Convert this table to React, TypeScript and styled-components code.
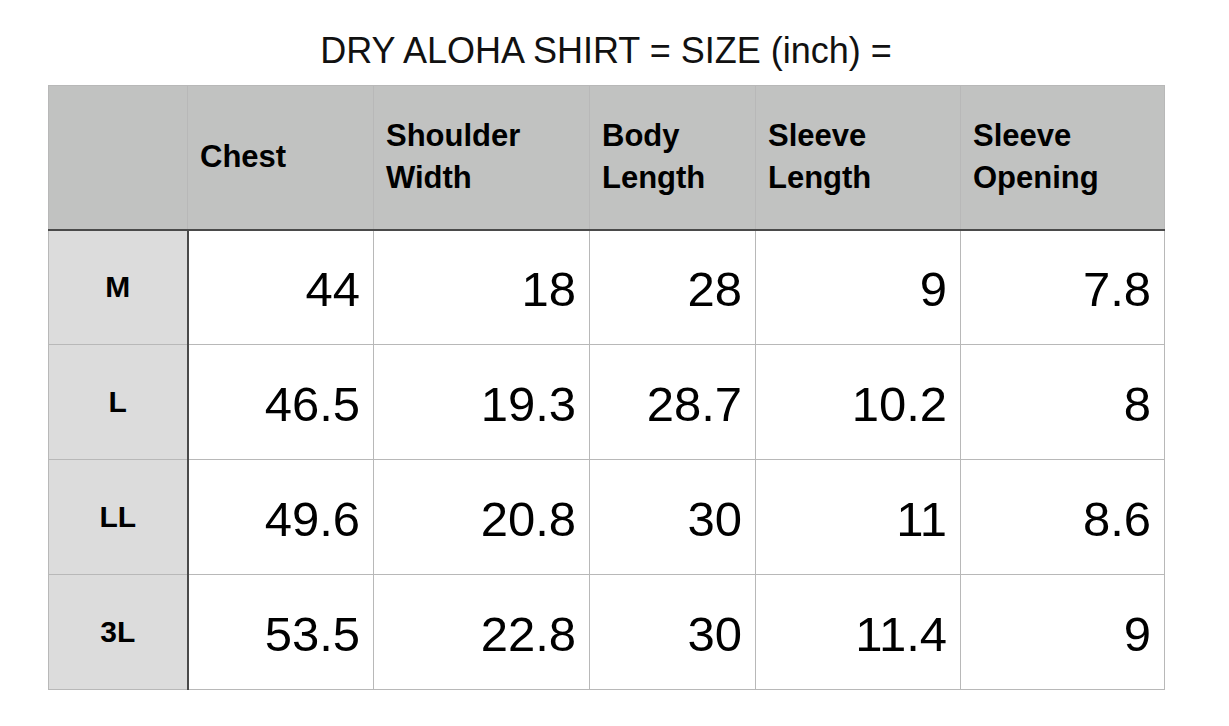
import React from 'react';
import styled, { createGlobalStyle } from 'styled-components';

const GlobalStyle = createGlobalStyle`
  html, body {
    margin: 0;
    padding: 0;
    background: #ffffff;
  }
  body {
    font-family: "Liberation Sans", Arial, sans-serif;
    color: #000000;
  }
`;

const line = '#b8b8b8';
const dark = '#4a4a4a';

const Page = styled.div`
  width: 1229px;
  padding: 0 0 0 48px;
  box-sizing: border-box;
`;

const Title = styled.h1`
  width: 1116px;
  height: 85px;
  margin: 0;
  padding-top: 16px;
  box-sizing: border-box;
  display: flex;
  align-items: center;
  justify-content: center;
  font-size: 36px;
  font-weight: 400;
  color: #111111;
`;

const Table = styled.table`
  border-collapse: collapse;
  table-layout: fixed;
  width: 1116px;
`;

const HeadCell = styled.th<{ $width: number }>`
  width: ${(p) => p.$width}px;
  height: 144px;
  padding: 0 0 0 12px;
  box-sizing: border-box;
  background: #c1c2c1;
  border: 1px solid ${line};
  border-bottom: 2px solid ${dark};
  text-align: left;
  vertical-align: middle;
  font-size: 31px;
  font-weight: 700;
  line-height: 42px;
`;

const SizeCell = styled.th`
  height: 115px;
  padding: 0;
  box-sizing: border-box;
  background: #dcdcdc;
  border: 1px solid ${line};
  border-right: 2px solid ${dark};
  text-align: center;
  vertical-align: middle;
  font-size: 30px;
  font-weight: 700;
`;

const ValueCell = styled.td`
  height: 115px;
  padding: 3px 13px 0 0;
  box-sizing: border-box;
  background: #ffffff;
  border: 1px solid ${line};
  text-align: right;
  vertical-align: middle;
  font-size: 49px;
  font-weight: 400;
`;

const columns = [
  { label: '', width: 139 },
  { label: 'Chest', width: 186 },
  { label: 'Shoulder Width', width: 216 },
  { label: 'Body Length', width: 166 },
  { label: 'Sleeve Length', width: 205 },
  { label: 'Sleeve Opening', width: 204 },
];

const rows: { size: string; values: string[] }[] = [
  { size: 'M', values: ['44', '18', '28', '9', '7.8'] },
  { size: 'L', values: ['46.5', '19.3', '28.7', '10.2', '8'] },
  { size: 'LL', values: ['49.6', '20.8', '30', '11', '8.6'] },
  { size: '3L', values: ['53.5', '22.8', '30', '11.4', '9'] },
];

function App() {
  return (
    <Page>
      <GlobalStyle />
      <Title>DRY ALOHA SHIRT = SIZE (inch) =</Title>
      <Table>
        <thead>
          <tr>
            {columns.map((col, i) => (
              <HeadCell key={i} $width={col.width}>
                {col.label.split(' ').map((word, j) => (
                  <React.Fragment key={j}>
                    {j > 0 && <br />}
                    {word}
                  </React.Fragment>
                ))}
              </HeadCell>
            ))}
          </tr>
        </thead>
        <tbody>
          {rows.map((row) => (
            <tr key={row.size}>
              <SizeCell>{row.size}</SizeCell>
              {row.values.map((v, i) => (
                <ValueCell key={i}>{v}</ValueCell>
              ))}
            </tr>
          ))}
        </tbody>
      </Table>
    </Page>
  );
}

export default App;
